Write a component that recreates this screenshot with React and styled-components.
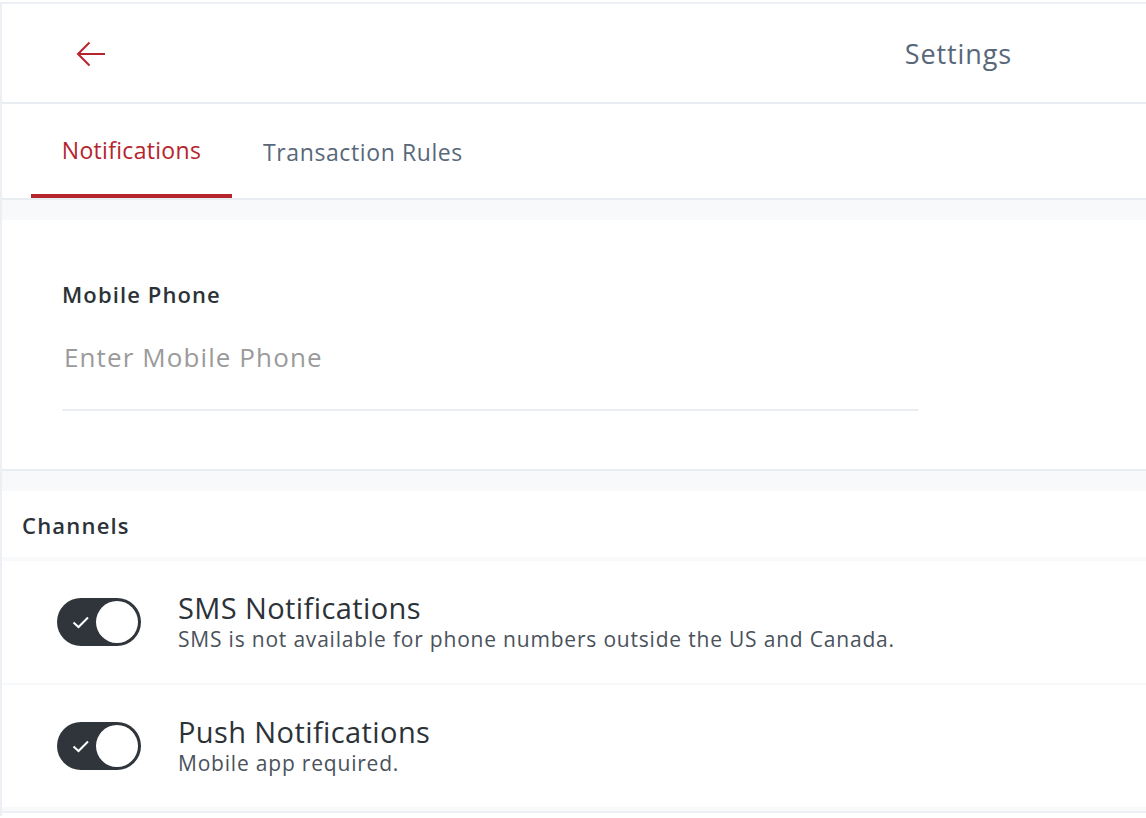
import React from 'react'
import styled, { createGlobalStyle } from 'styled-components'

const GlobalStyle = createGlobalStyle`
  html, body {
    margin: 0;
    padding: 0;
    background: #ffffff;
  }
  body {
    font-family: "Open Sans", Lato, sans-serif;
    color: #2c3338;
  }
`;

const Page = styled.div`
  margin-top: 2px;
  border-top: 2px solid #eceff4;
  border-left: 2px solid #eceff4;
  min-height: 814px;
  box-sizing: border-box;
`;

const Header = styled.header`
  height: 98px;
  display: flex;
  align-items: center;
  justify-content: space-between;
  padding: 0 134px 0 74px;
  border-bottom: 2px solid #e9ecf1;
`;

const BackButton = styled.button`
  border: 0;
  background: none;
  padding: 0;
  display: flex;
  cursor: pointer;
  margin-top: 1px;
`;

const Title = styled.h1`
  margin: 0;
  font-size: 27px;
  font-weight: 400;
  letter-spacing: 0.9px;
  color: #58677a;
`;

const Tabs = styled.nav`
  height: 96px;
  display: flex;
  padding-left: 29px;
  border-bottom: 2px solid #e9ecf1;
  box-sizing: border-box;
`;

const Tab = styled.div`
  width: ${p => p.width}px;
  display: flex;
  align-items: center;
  justify-content: center;
  font-size: 23px;
  letter-spacing: ${p => (p.active ? 0.3 : 0.6)}px;
  color: ${p => (p.active ? '#b5252d' : '#58677a')};
  border-bottom: 4px solid ${p => (p.active ? '#b5252d' : 'transparent')};
  padding-top: ${p => (p.active ? 2 : 6)}px;
  box-sizing: border-box;
`;

const Gap = styled.div`
  height: 20px;
  background: #f8f9fb;
  border-top: ${p => (p.top ? '2px solid #e9ecf1' : '0')};
`;

const Card = styled.section`
  height: 249px;
  padding: 62px 0 0 60px;
  box-sizing: border-box;
`;

const Label = styled.label`
  display: block;
  font-size: 22px;
  line-height: 25px;
  font-weight: 600;
  color: #2c3338;
  letter-spacing: 1.1px;
`;

const PhoneInput = styled.input`
  display: block;
  width: 856px;
  margin-top: 35px;
  padding: 0 0 36px 2px;
  border: 0;
  border-bottom: 2px solid #e9ecf1;
  outline: none;
  font-family: inherit;
  font-size: 26px;
  line-height: 31px;
  letter-spacing: 1.1px;
  color: #2c3338;
  background: transparent;
  box-sizing: border-box;
  &::placeholder {
    color: #9a9a9a;
  }
`;

const SectionHead = styled.h2`
  margin: 0;
  height: 66px;
  display: flex;
  align-items: center;
  padding: 2px 0 0 20px;
  box-sizing: border-box;
  font-size: 22px;
  font-weight: 600;
  letter-spacing: 1.2px;
  color: #2c3338;
`;

const ChannelRow = styled.div`
  height: 122px;
  display: flex;
  align-items: center;
  gap: 37px;
  padding-left: 55px;
  border-top: ${p => p.sep}px solid #f8f9fb;
`;

const Toggle = styled.span`
  position: relative;
  width: 84px;
  height: 48px;
  border-radius: 24px;
  background: #2f353b;
  flex-shrink: 0;
  display: flex;
  align-items: center;
  padding-left: 15px;
  box-sizing: border-box;
`;

const Knob = styled.span`
  position: absolute;
  right: 3px;
  top: 3px;
  width: 42px;
  height: 42px;
  border-radius: 50%;
  background: #ffffff;
`;

const ChannelText = styled.div`
  display: flex;
  flex-direction: column;
  margin-top: -2px;
`;

const ChannelTitle = styled.div`
  font-size: 29px;
  line-height: 34px;
  letter-spacing: 0.4px;
  color: #2c3338;
`;

const ChannelNote = styled.div`
  margin-top: 2px;
  font-size: 21px;
  line-height: 24px;
  color: #4a525b;
  letter-spacing: 0.8px;
`;

const Bottom = styled.div`
  height: 4px;
  background: #f8f9fb;
  border-bottom: 2px solid #eceff4;
`;

const ArrowIcon = () => (
  <svg width="30" height="26" viewBox="0 0 30 26" fill="none">
    <path d="M29 13H2M13.5 1.5L2 13l11.5 11.5" stroke="#b5252d" strokeWidth="2" />
  </svg>
)

const CheckIcon = () => (
  <svg width="18" height="14" viewBox="0 0 18 14" fill="none">
    <path d="M1.5 7.5l5 4.5 9.5-9.5" stroke="#ffffff" strokeWidth="2" />
  </svg>
)

const channels = [
  { title: 'SMS Notifications', note: 'SMS is not available for phone numbers outside the US and Canada.' },
  { title: 'Push Notifications', note: 'Mobile app required.' },
]

const App = () => (
  <>
    <GlobalStyle />
    <Page>
      <Header>
        <BackButton aria-label="Back"><ArrowIcon /></BackButton>
        <Title>Settings</Title>
      </Header>
      <Tabs>
        <Tab active width={201}>Notifications</Tab>
        <Tab width={262}>Transaction Rules</Tab>
      </Tabs>
      <Gap />
      <Card>
        <Label>Mobile Phone</Label>
        <PhoneInput placeholder="Enter Mobile Phone" />
      </Card>
      <Gap top />
      <SectionHead>Channels</SectionHead>
      {channels.map((c, i) => (
        <ChannelRow key={c.title} sep={i === 0 ? 4 : 2}>
          <Toggle>
            <CheckIcon />
            <Knob />
          </Toggle>
          <ChannelText>
            <ChannelTitle>{c.title}</ChannelTitle>
            <ChannelNote>{c.note}</ChannelNote>
          </ChannelText>
        </ChannelRow>
      ))}
      <Bottom />
    </Page>
  </>
)

export default App
